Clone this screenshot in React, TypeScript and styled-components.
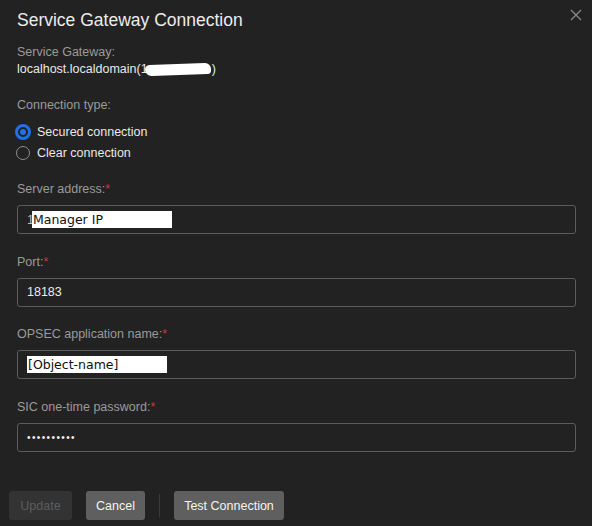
import React from 'react';
import styled, { createGlobalStyle } from 'styled-components';

const GlobalStyle = createGlobalStyle`
  html, body {
    margin: 0;
    padding: 0;
    background: #222222;
  }
  body {
    font-family: "Liberation Sans", Arial, sans-serif;
    font-size: 12.5px;
    color: #e4e4e4;
  }
`;

const Dialog = styled.div`
  width: 592px;
  height: 526px;
  box-sizing: border-box;
  background: #222222;
  position: relative;
  display: flex;
  flex-direction: column;
`;

const Title = styled.h1`
  margin: 0;
  padding: 8px 0 0 17px;
  font-size: 17.5px;
  font-weight: normal;
  line-height: 24px;
  color: #ececec;
`;

const CloseButton = styled.button`
  position: absolute;
  top: 8px;
  right: 9px;
  width: 14px;
  height: 14px;
  padding: 0;
  border: none;
  background: none;
  cursor: pointer;
  display: flex;
  align-items: center;
  justify-content: center;
`;

const Body = styled.div`
  display: flex;
  flex-direction: column;
  padding: 12px 16px 0 17px;
`;

const Caption = styled.div`
  color: #9a9a9a;
  line-height: 16px;
`;

const Value = styled.div`
  color: #e8e8e8;
  line-height: 19px;
  display: flex;
  align-items: center;
`;

const Blot = styled.span`
  display: inline-block;
  width: 66px;
  height: 11px;
  margin: 0 1px 0 -3px;
  background: #ffffff;
  border-radius: 6px 8px 5px 9px;
  transform: rotate(-2deg);
`;

const Section = styled.div<{ $top: number }>`
  margin-top: ${({ $top }) => $top}px;
  display: flex;
  flex-direction: column;
`;

const RadioList = styled.div`
  display: flex;
  flex-direction: column;
  margin-top: 8px;
`;

const RadioRow = styled.label`
  display: flex;
  align-items: center;
  height: 21px;
  gap: 6px;
  color: #e8e8e8;
  cursor: pointer;
`;

const RadioDot = styled.span<{ $checked?: boolean }>`
  box-sizing: border-box;
  width: ${({ $checked }) => ($checked ? 16 : 14)}px;
  height: ${({ $checked }) => ($checked ? 16 : 14)}px;
  margin-left: ${({ $checked }) => ($checked ? -2 : -1)}px;
  margin-right: ${({ $checked }) => ($checked ? 0 : 1)}px;
  border-radius: 50%;
  border: ${({ $checked }) => ($checked ? '3px solid #2070e6' : '1px solid #8c8c8c')};
  display: flex;
  align-items: center;
  justify-content: center;

  &::after {
    content: '';
    display: ${({ $checked }) => ($checked ? 'block' : 'none')};
    width: 6px;
    height: 6px;
    border-radius: 50%;
    background: #2070e6;
  }
`;

const Fields = styled.div`
  display: flex;
  flex-direction: column;
  gap: 19.5px;
  margin-top: 18px;
`;

const Field = styled.div`
  display: flex;
  flex-direction: column;
  gap: 8px;
`;

const Required = styled.span`
  color: #d1343f;
`;

const InputBox = styled.div`
  box-sizing: border-box;
  height: 29px;
  width: 559px;
  border: 1px solid #5c5c5c;
  border-radius: 3px;
  padding: 0 9px;
  display: flex;
  align-items: center;
  color: #ececec;
`;

const Masked = styled.span<{ $offset?: number }>`
  display: inline-block;
  box-sizing: border-box;
  width: 140px;
  height: 17px;
  margin-left: ${({ $offset }) => $offset ?? 0}px;
  background: #ffffff;
  color: #101010;
  font-family: "DejaVu Sans", Verdana, sans-serif;
  font-size: 12.5px;
  line-height: 17px;
  padding-left: 1px;
  white-space: nowrap;
  overflow: hidden;
`;

const Faded = styled.span`
  color: #bdbdbd;
`;

const Dots = styled.span`
  font-size: 10px;
  letter-spacing: 1.4px;
  color: #f0f0f0;
`;

const Footer = styled.div`
  margin-top: auto;
  padding: 0 0 6px 9px;
  display: flex;
  align-items: center;
  gap: 14px;
`;

const Button = styled.button<{ $disabled?: boolean; $width: number }>`
  box-sizing: border-box;
  width: ${({ $width }) => $width}px;
  height: 29px;
  border: none;
  border-radius: 3px;
  font-family: inherit;
  font-size: 12.5px;
  padding: 0;
  background: ${({ $disabled }) => ($disabled ? '#333333' : '#5f5f5f')};
  color: ${({ $disabled }) => ($disabled ? '#5d5d5d' : '#f4f4f4')};
  cursor: ${({ $disabled }) => ($disabled ? 'default' : 'pointer')};
`;

const Divider = styled.span`
  width: 1px;
  height: 23px;
  background: #3a3a3a;
`;

function CloseIcon() {
  return (
    <svg width="12" height="12" viewBox="0 0 12 12">
      <path d="M1 1 L11 11 M11 1 L1 11" stroke="#8a8a8a" strokeWidth="1.3" fill="none" />
    </svg>
  );
}

export default function App() {
  return (
    <>
      <GlobalStyle />
      <Dialog>
        <Title>Service Gateway Connection</Title>
        <CloseButton aria-label="Close">
          <CloseIcon />
        </CloseButton>
        <Body>
          <Caption>Service Gateway:</Caption>
          <Value>
            localhost.localdomain(1<Blot />)
          </Value>

          <Section $top={18}>
            <Caption>Connection type:</Caption>
            <RadioList>
              <RadioRow>
                <RadioDot $checked />
                Secured connection
              </RadioRow>
              <RadioRow>
                <RadioDot />
                Clear connection
              </RadioRow>
            </RadioList>
          </Section>

          <Fields>
            <Field>
              <Caption>
                Server address:<Required>*</Required>
              </Caption>
              <InputBox>
                <Faded>1</Faded>
                <Masked $offset={-2}>Manager IP</Masked>
              </InputBox>
            </Field>
            <Field>
              <Caption>
                Port:<Required>*</Required>
              </Caption>
              <InputBox>18183</InputBox>
            </Field>
            <Field>
              <Caption>
                OPSEC application name:<Required>*</Required>
              </Caption>
              <InputBox>
                <Masked>[Object-name]</Masked>
              </InputBox>
            </Field>
            <Field>
              <Caption>
                SIC one-time password:<Required>*</Required>
              </Caption>
              <InputBox>
                <Dots>••••••••••</Dots>
              </InputBox>
            </Field>
          </Fields>
        </Body>
        <Footer>
          <Button $disabled $width={63}>Update</Button>
          <Button $width={59}>Cancel</Button>
          <Divider />
          <Button $width={110}>Test Connection</Button>
        </Footer>
      </Dialog>
    </>
  );
}
